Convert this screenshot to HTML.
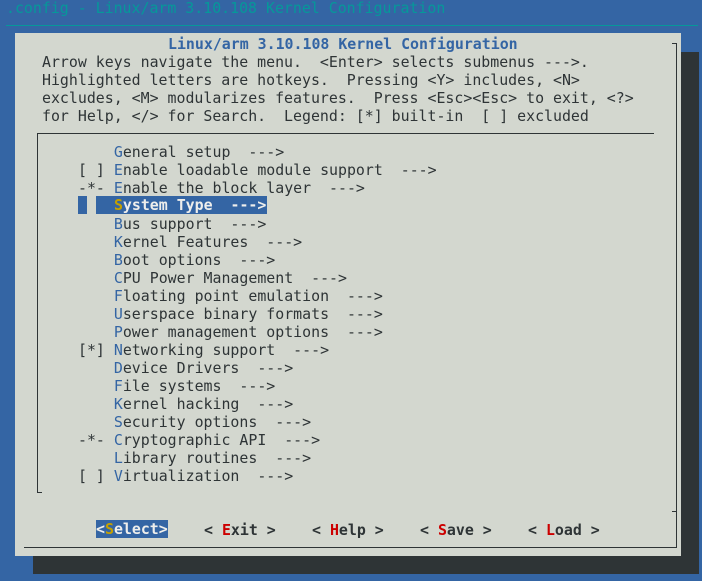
<!DOCTYPE html>
<html><head><meta charset="utf-8"><style>
body{margin:0;width:702px;height:581px;background:#3465a4;position:relative;overflow:hidden;font-family:"DejaVu Sans Mono","Liberation Mono",monospace;font-size:14.9px;}
.r{position:absolute;white-space:pre;line-height:18px;height:18px;color:#2e3436;}
.h{color:#3465a4}
.b{position:absolute;background:#2e3436}
.sel{background:#3465a4;color:#eeeeec;font-weight:bold}
.y{color:#c4a000}
.red{color:#cc0000}
</style></head><body>
<div class="r" style="left:6px;top:-1px;color:#06989a">.config - Linux/arm 3.10.108 Kernel Configuration</div>
<div class="b" style="left:6px;top:25px;width:692px;height:1px;background:#06989a"></div>
<div class="b" style="left:33px;top:52px;width:666px;height:522px"></div>
<div style="position:absolute;left:15px;top:33px;width:666px;height:523px;background:#d3d7cf"></div>
<div class="b" style="left:676px;top:43px;width:1px;height:505px"></div>
<div class="b" style="left:672px;top:43px;width:5px;height:1px"></div>
<div class="b" style="left:24px;top:547px;width:653px;height:1px"></div>
<div class="b" style="left:672px;top:511px;width:5px;height:1px"></div>
<div class="b" style="left:37px;top:133px;width:617px;height:1px"></div>
<div class="b" style="left:37px;top:133px;width:1px;height:360px"></div>
<div class="b" style="left:37px;top:492px;width:5px;height:1px"></div>
<div class="r" style="left:168px;top:35px;color:#3465a4;font-weight:bold">Linux/arm 3.10.108 Kernel Configuration</div>
<div class="r" style="left:42px;top:53px">Arrow keys navigate the menu.  &lt;Enter&gt; selects submenus ---&gt;.</div>
<div class="r" style="left:42px;top:71px">Highlighted letters are hotkeys.  Pressing &lt;Y&gt; includes, &lt;N&gt;</div>
<div class="r" style="left:42px;top:89px">excludes, &lt;M&gt; modularizes features.  Press &lt;Esc&gt;&lt;Esc&gt; to exit, &lt;?&gt;</div>
<div class="r" style="left:42px;top:107px">for Help, &lt;/&gt; for Search.  Legend: [*] built-in  [ ] excluded</div>
<div class="r" style="left:78px;top:143px">    <span class="h">G</span>eneral setup  ---&gt;</div>
<div class="r" style="left:78px;top:161px">[ ] <span class="h">E</span>nable loadable module support  ---&gt;</div>
<div class="r" style="left:78px;top:179px">-*- <span class="h">E</span>nable the block layer  ---&gt;</div>
<div style="position:absolute;left:78px;top:196px;width:9px;height:18px;background:#3465a4"></div>
<div class="r sel" style="left:96px;top:196px;width:171px">  <span class="y">S</span>ystem Type  ---&gt;</div>
<div class="r" style="left:78px;top:215px">    <span class="h">B</span>us support  ---&gt;</div>
<div class="r" style="left:78px;top:233px">    <span class="h">K</span>ernel Features  ---&gt;</div>
<div class="r" style="left:78px;top:251px">    <span class="h">B</span>oot options  ---&gt;</div>
<div class="r" style="left:78px;top:269px">    <span class="h">C</span>PU Power Management  ---&gt;</div>
<div class="r" style="left:78px;top:287px">    <span class="h">F</span>loating point emulation  ---&gt;</div>
<div class="r" style="left:78px;top:305px">    <span class="h">U</span>serspace binary formats  ---&gt;</div>
<div class="r" style="left:78px;top:323px">    <span class="h">P</span>ower management options  ---&gt;</div>
<div class="r" style="left:78px;top:341px">[*] <span class="h">N</span>etworking support  ---&gt;</div>
<div class="r" style="left:78px;top:359px">    <span class="h">D</span>evice Drivers  ---&gt;</div>
<div class="r" style="left:78px;top:377px">    <span class="h">F</span>ile systems  ---&gt;</div>
<div class="r" style="left:78px;top:395px">    <span class="h">K</span>ernel hacking  ---&gt;</div>
<div class="r" style="left:78px;top:413px">    <span class="h">S</span>ecurity options  ---&gt;</div>
<div class="r" style="left:78px;top:431px">-*- <span class="h">C</span>ryptographic API  ---&gt;</div>
<div class="r" style="left:78px;top:449px">    <span class="h">L</span>ibrary routines  ---&gt;</div>
<div class="r" style="left:78px;top:467px">[ ] <span class="h">V</span>irtualization  ---&gt;</div>
<div class="r sel" style="left:96px;top:520px;width:72px">&lt;<span class="y">S</span>elect&gt;</div>
<div class="r" style="left:204px;top:521px;font-weight:bold">&lt; <span class="red">E</span>xit &gt;</div>
<div class="r" style="left:312px;top:521px;font-weight:bold">&lt; <span class="red">H</span>elp &gt;</div>
<div class="r" style="left:420px;top:521px;font-weight:bold">&lt; <span class="red">S</span>ave &gt;</div>
<div class="r" style="left:528px;top:521px;font-weight:bold">&lt; <span class="red">L</span>oad &gt;</div>
</body></html>
